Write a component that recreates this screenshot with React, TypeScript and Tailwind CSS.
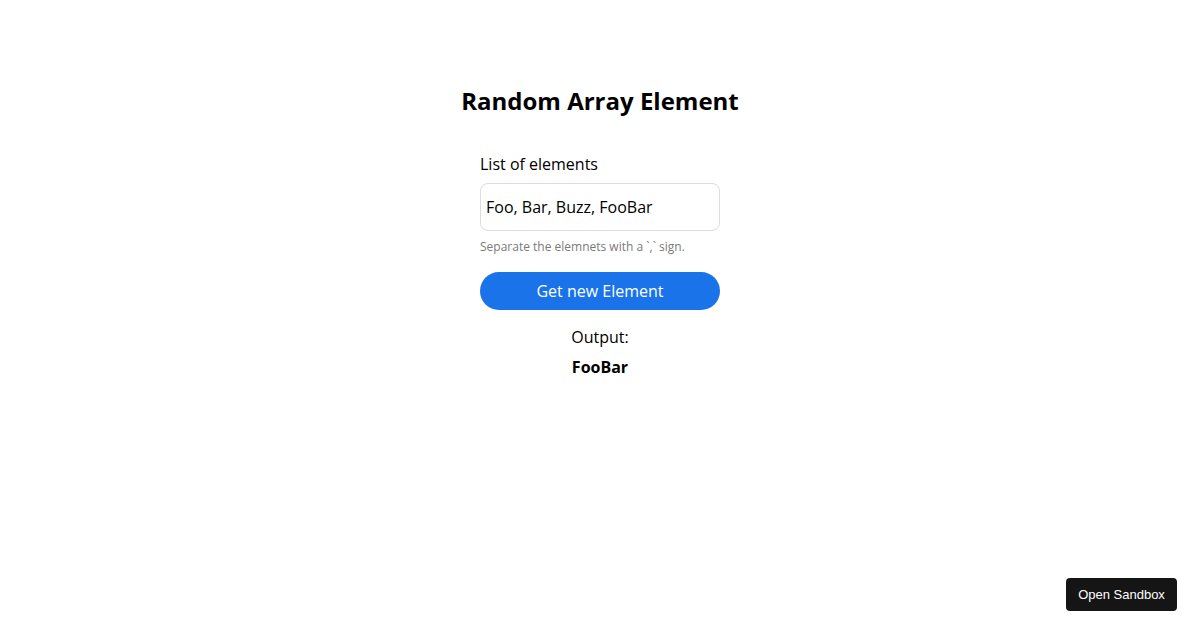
export default function App() {
  return (
    <div className="relative h-[630px] w-full bg-white font-['Open_Sans',sans-serif] text-black">
      <div className="flex flex-col items-center pt-[85px]">
        <h1 className="text-2xl leading-8 font-bold">Random Array Element</h1>
        <div className="mt-[35px] flex w-[240px] flex-col">
          <label className="text-base leading-6">List of elements</label>
          <input
            defaultValue="Foo, Bar, Buzz, FooBar"
            className="mt-[7px] h-[48px] w-full rounded-lg border border-[#dcdcdc] px-[5px] text-base outline-none"
          />
          <p className="mt-2 text-xs leading-4 text-[#7a7a7a]">Separate the elemnets with a `,` sign.</p>
          <button className="mt-[17px] h-[38px] w-full rounded-full bg-[#1a73e8] text-base text-white">
            Get new Element
          </button>
        </div>
        <div className="mt-[15px] text-base leading-6">Output:</div>
        <div className="mt-[6px] text-base leading-6 font-bold">FooBar</div>
      </div>
      <button className="absolute right-[23px] bottom-[19px] h-[33px] w-[111px] rounded bg-[#151515] font-['Liberation_Sans',sans-serif] text-[13px] text-white">
        Open Sandbox
      </button>
    </div>
  );
}
